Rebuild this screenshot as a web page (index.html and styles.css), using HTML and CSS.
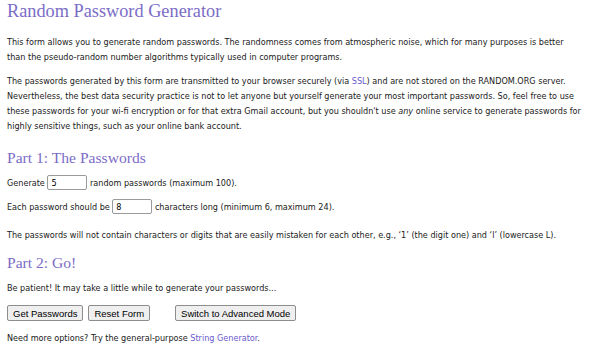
FILE: index.html
```html
<!DOCTYPE html>
<html>
<head>
<meta charset="utf-8">
<link rel="stylesheet" href="styles.css">
</head>
<body>
<div class="page">
<h1 class="title">Random Password Generator</h1>
<p class="para intro">This form allows you to generate random passwords. The randomness comes from atmospheric noise, which for many purposes is better<br>than the pseudo-random number algorithms typically used in computer programs.</p>
<p class="para">The passwords generated by this form are transmitted to your browser securely (via <a class="link" href="#">SSL</a>) and are not stored on the RANDOM.ORG server. Nevertheless, the best data security practice is not to let anyone but yourself generate your most important passwords. So, feel free to use these passwords for your wi-fi encryption or for that extra Gmail account, but you shouldn't use <em>any</em> online service to generate passwords for highly sensitive things, such as your online bank account.</p>
<h2 class="section">Part 1: The Passwords</h2>
<p class="para field-row">Generate <input class="field" type="text" value="5"> random passwords (maximum 100).</p>
<p class="para field-row">Each password should be <input class="field" type="text" value="8"> characters long (minimum 6, maximum 24).</p>
<p class="para note">The passwords will not contain characters or digits that are easily mistaken for each other, e.g., ‘1’ (the digit one) and ‘l’ (lowercase L).</p>
<h2 class="section section-go">Part 2: Go!</h2>
<p class="para">Be patient! It may take a little while to generate your passwords...</p>
<div class="buttons">
<button class="btn" type="button">Get Passwords</button>
<button class="btn" type="button">Reset Form</button>
<button class="btn btn-adv" type="button">Switch to Advanced Mode</button>
</div>
<p class="para">Need more options? Try the general-purpose <a class="link" href="#">String Generator</a>.</p>
</div>
</body>
</html>
```
FILE: styles.css
```css
html, body {
  margin: 0;
  padding: 0;
  background: #fff;
}
.page {
  width: 584px;
  padding: 0 7px;
  font-family: "DejaVu Sans Condensed", "DejaVu Sans", Verdana, sans-serif;
  font-size: 9px;
  line-height: 15px;
  color: #1a1a1a;
}
.title {
  font-family: "Liberation Serif", Georgia, serif;
  font-weight: normal;
  color: #7b6cc6;
  font-size: 18.3px;
  line-height: 22px;
  margin: 0 0 13px;
}
.section {
  font-family: "Liberation Serif", Georgia, serif;
  font-weight: normal;
  color: #7b6cc6;
  font-size: 15.6px;
  line-height: 20px;
  margin: 14px 0 8px;
}
.section-go {
  margin-top: 10px;
}
.para {
  margin: 0 0 9px;
}
.field-row {
  margin-bottom: 9px;
}
.note {
  margin-top: 13px;
}
.link {
  color: #6a5acd;
  text-decoration: none;
}
.field {
  width: 40px;
  height: 15px;
  box-sizing: border-box;
  border: 1px solid #9a9a9a;
  border-radius: 2px;
  padding: 0 3px;
  font-family: "DejaVu Sans Condensed", "DejaVu Sans", Verdana, sans-serif;
  font-size: 9px;
  color: #000;
  vertical-align: middle;
  margin: -2px 0 0;
}
.buttons {
  display: flex;
  gap: 5px;
  margin: 8px 0 10px;
}
.btn {
  font-family: "Liberation Sans", Arial, sans-serif;
  font-size: 9.5px;
  height: 16px;
  padding: 0 5px;
  border: 1px solid #8d8d8d;
  border-radius: 2px;
  background: #efefef;
  color: #000;
}
.btn-adv {
  margin-left: 20px;
}
```
